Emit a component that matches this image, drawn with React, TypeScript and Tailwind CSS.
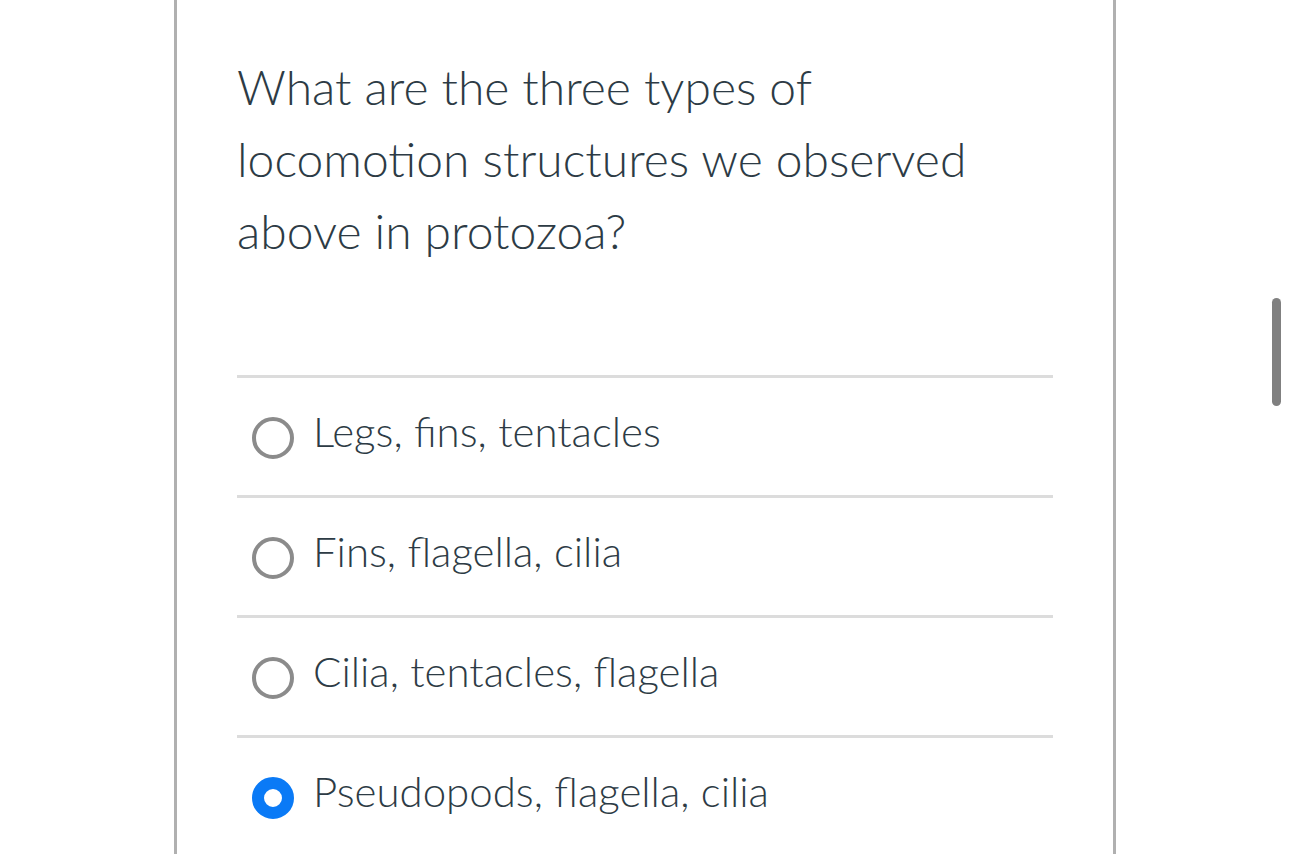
import React from 'react';

const options = [
  { label: 'Legs, fins, tentacles', checked: false },
  { label: 'Fins, flagella, cilia', checked: false },
  { label: 'Cilia, tentacles, flagella', checked: false },
  { label: 'Pseudopods, flagella, cilia', checked: true },
];

export default function App() {
  return (
    <div className="relative h-[854px] w-[1290px] overflow-hidden bg-white font-['Lato',sans-serif] font-light text-[#2d3b45]">
      <div className="ml-[174px] h-full w-[942px] border-x-[3px] border-[#b0b0b0] px-[60px] pt-[51px]">
        <p className="text-[48px] leading-[72px]">
          What are the three types of locomotion structures we observed above in protozoa?
        </p>

        <div className="mt-[108px]">
          {options.map((o) => (
            <div key={o.label} className="flex h-[120px] items-start border-t-[3px] border-[#dcdcdc] pt-[32px]">
              <span
                className={`mt-[7px] ml-[15px] h-[42px] w-[42px] shrink-0 rounded-full ${
                  o.checked ? 'border-[12px] border-[#0a7af6]' : 'border-[4px] border-[#8b8b8b]'
                }`}
              />
              <span className="ml-[19px] text-[42px] leading-[42px]">{o.label}</span>
            </div>
          ))}
        </div>
      </div>

      <div className="absolute left-[1272px] top-[298px] h-[108px] w-[9px] rounded-full bg-[#808080]" />
    </div>
  );
}
